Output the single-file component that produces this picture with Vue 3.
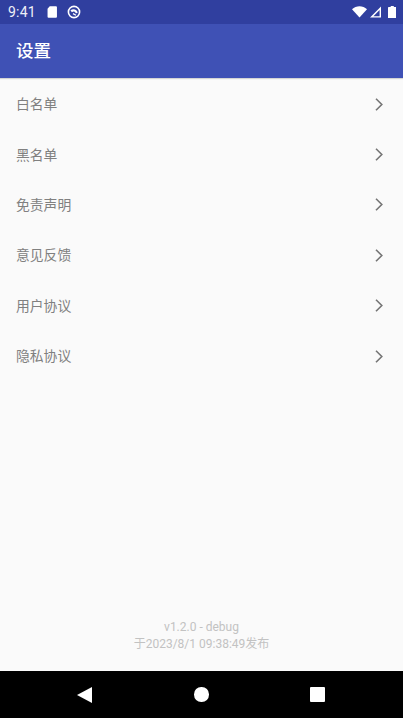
<script setup>
const items = ['白名单', '黑名单', '免责声明', '意见反馈', '用户协议', '隐私协议']
</script>

<template>
  <div class="page">
    <div class="status">
      <span class="time">9:41</span>
      <svg class="sd" viewBox="0 0 10 12" width="10.5" height="12"><path d="M2.5 0.3H8.7A1 1 0 0 1 9.7 1.3V10.7A1 1 0 0 1 8.7 11.7H1.3A1 1 0 0 1 .3 10.7V2.8Z" fill="#fff"/></svg>
      <svg class="sync" viewBox="0 0 14 14" width="14" height="14"><circle cx="7" cy="7" r="5.6" fill="none" stroke="#fff" stroke-width="1.6"/><path d="M3.4 5.4C6 3.4 9.4 4.2 10.8 7.4L8.9 8.4C8 6.6 6.4 6 5 7.2Z" fill="#fff"/><path d="M6 8.6L9 10.2" stroke="#fff" stroke-width="1.3"/></svg>
      <span class="spacer"></span>
      <svg viewBox="0 0 15 12" width="15" height="12"><path d="M0 3.2C4.2 -.8 10.8 -.8 15 3.2L7.5 11.6Z" fill="#fff"/></svg>
      <svg class="signal" viewBox="0 0 12 12" width="12" height="12"><path d="M12 .5V11.5H1ZM10.6 4L4.4 10.2H10.6Z" fill="#fff" fill-rule="evenodd"/></svg>
      <svg class="battery" viewBox="0 0 8.5 12.5" width="8.5" height="12.5"><path d="M2.7 0H5.8V1H7.7A.8.8 0 0 1 8.5 1.8V11.7A.8.8 0 0 1 7.7 12.5H.8A.8.8 0 0 1 0 11.7V1.8A.8.8 0 0 1 .8 1H2.7Z" fill="#fff"/></svg>
    </div>
    <header class="appbar">设置</header>
    <main class="content">
      <ul class="list">
        <li v-for="item in items" :key="item" class="row">
          <span>{{ item }}</span>
          <svg class="chevron" viewBox="0 0 8 13" width="8" height="13"><path d="M1 .8L6.8 6.5L1 12.2" fill="none" stroke="#757575" stroke-width="1.6"/></svg>
        </li>
      </ul>
      <footer class="foot">
        <div>v1.2.0 - debug</div>
        <div>于2023/8/1 09:38:49发布</div>
      </footer>
    </main>
    <nav class="nav">
      <svg viewBox="0 0 15 16" width="15" height="16"><path d="M0 8L15 0V16Z" fill="#fff"/></svg>
      <span class="dot"></span>
      <span class="square"></span>
    </nav>
  </div>
</template>

<style scoped>
.page {
  width: 403px;
  height: 718px;
  display: flex;
  flex-direction: column;
  overflow: hidden;
  background: #fafafa;
  font-family: Roboto, "Noto Sans CJK SC", sans-serif;
}
.status {
  height: 23.5px;
  flex: none;
  background: #303f9f;
  color: #fff;
  display: flex;
  align-items: center;
  padding: 0 7px 0 8px;
}
.time { font-size: 14px; letter-spacing: 0.2px; margin-right: 11.5px; opacity: .92; }
.sd { margin-right: 9.5px; }
.spacer { flex: 1; }
.signal { margin: 0 6.5px 0 2px; }
.appbar {
  height: 54.5px;
  flex: none;
  background: #3f51b5;
  color: #fff;
  font-size: 17.5px;
  font-weight: 500;
  line-height: 55px;
  padding-left: 16px;
  box-shadow: 0 1px 1px rgba(0,0,0,.15);
  z-index: 1;
}
.content {
  flex: 1;
  display: flex;
  flex-direction: column;
  justify-content: space-between;
}
.list { list-style: none; margin: 0; padding: 0; }
.row {
  height: 50.4px;
  display: flex;
  align-items: center;
  justify-content: space-between;
  padding: 0 20px 0 16px;
  color: #808080;
  font-size: 13.8px;
}
.chevron { margin-top: 2px; }
.foot {
  text-align: center;
  color: #c2c2c2;
  font-size: 12px;
  line-height: 17px;
  padding-bottom: 18px;
}
.nav {
  height: 47px;
  flex: none;
  background: #000;
  display: flex;
  align-items: center;
  padding-left: 77px;
}
.dot { width: 14.5px; height: 14.5px; border-radius: 50%; background: #fff; margin-left: 102px; }
.square { width: 15px; height: 15px; background: #fff; border-radius: 1px; margin-left: 101.5px; }
</style>
